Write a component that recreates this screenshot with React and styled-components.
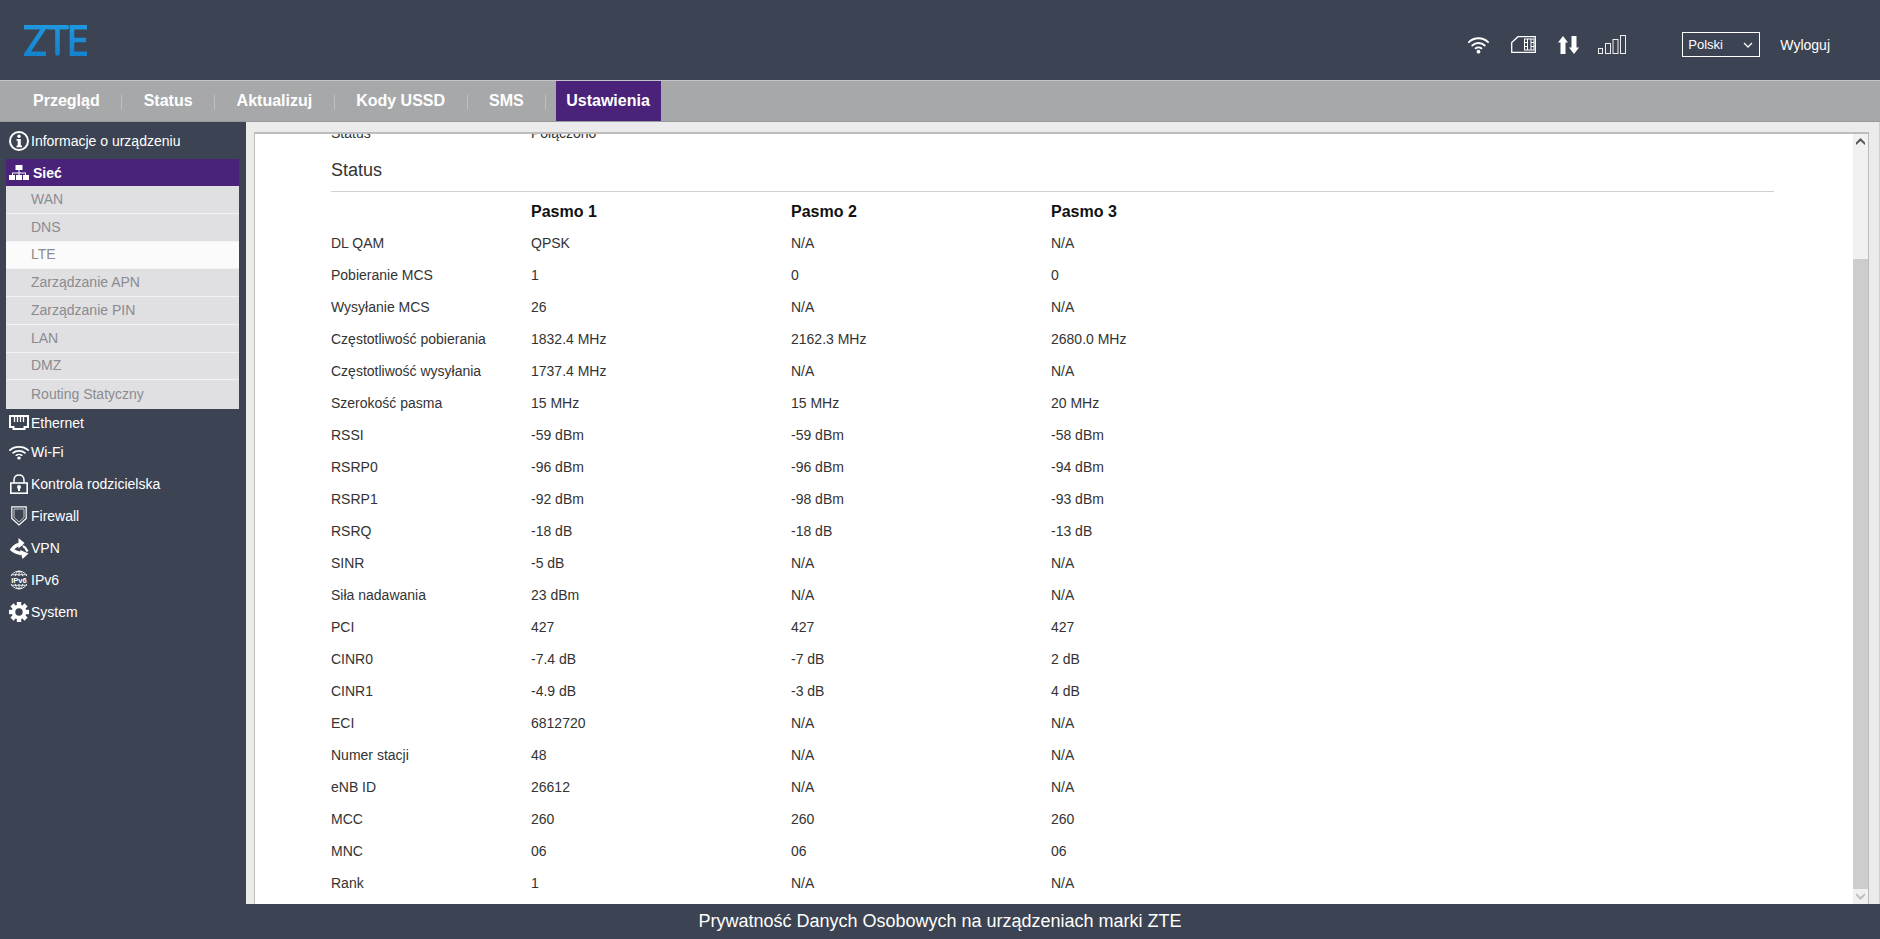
import React from "react";
import styled, { createGlobalStyle } from "styled-components";

const GlobalStyle = createGlobalStyle`
    html, body {
        margin: 0;
        padding: 0;
        height: 100%;
        overflow: hidden;
    }
    body {
        font-family: "Liberation Sans", Arial, sans-serif;
        font-size: 14px;
        color: #333;
    }
`;

const Page = styled.div`
    display: flex;
    flex-direction: column;
    height: 100vh;
    background-color: #3c4352;
`;

const Header = styled.header`
    flex: 0 0 80px;
    display: flex;
    align-items: center;
    justify-content: space-between;
    padding-left: 24px;
    box-sizing: content-box;
    border-bottom: 1px solid #c4c5c8;
`;

const HeaderRight = styled.div`
    display: flex;
    align-items: center;
    padding-right: 50px;
    padding-top: 9px;
`;

const StatusIcons = styled.div`
    display: flex;
    align-items: center;
    gap: 22px;
    margin-right: 56px;
`;

const SignalSvg = styled.svg`
    margin-left: -3px;
`;

const Language = styled.div`
    width: 78px;
    height: 25px;
    box-sizing: border-box;
    border: 1px solid #fff;
    display: flex;
    align-items: center;
    justify-content: space-between;
    padding: 0 6px 0 5px;
    color: #fff;
    font-size: 13px;
    margin-right: 20px;
`;

const Logout = styled.a`
    color: #fff;
    font-size: 14px;
`;

const Nav = styled.nav`
    flex: 0 0 40px;
    display: flex;
    align-items: stretch;
    padding-left: 33px;
    background-color: #a7a8aa;
    border-bottom: 1px solid #97989b;
`;

const NavItem = styled.a`
    display: flex;
    align-items: center;
    color: #fff;
    font-size: 16px;
    font-weight: bold;
    padding: ${props => props.$active ? "0 11px 0 10px" : "0"};
    background-color: ${props => props.$active ? "#4a227a" : "transparent"};
`;

const NavSep = styled.span`
    align-self: center;
    width: 1px;
    height: 14px;
    margin: 2px 21.5px 0;
    background-color: #bfc0c2;
`;

const LastNavSep = styled(NavSep)`
    margin-right: 10px;
`;

const Main = styled.div`
    flex: 1;
    display: flex;
    min-height: 0;
`;

const Sidebar = styled.aside`
    flex: 0 0 246px;
    padding-top: 1px;
    color: #fff;
`;

const MenuRow = styled.div`
    display: flex;
    align-items: center;
    height: ${props => props.$h || 32}px;
    padding-left: 9px;
    gap: 2px;
    font-size: 14px;
`;

const IconSlot = styled.span`
    width: 20px;
    height: 20px;
    display: flex;
    align-items: center;
    justify-content: center;
`;

const Group = styled.div`
    margin: 0 7px 0 6px;
`;

const GroupHead = styled.div`
    display: flex;
    align-items: center;
    height: 27px;
    padding-left: 3px;
    gap: 4px;
    background-color: #4a227a;
    font-weight: bold;
`;

const SubItem = styled.div`
    display: flex;
    align-items: center;
    padding-left: 25px;
    padding-bottom: 1px;
    color: #8b8b90;
    background-color: ${props => props.$active ? "#fbfbfb" : "#e0e0e2"};
    border-bottom: ${props => props.$last ? "0" : "1px solid #f2f2f3"};
    height: ${props => props.$last ? 27.75 : 25.75}px;
`;

const Content = styled.main`
    flex: 1;
    min-width: 0;
    display: flex;
    padding: 10px 10px 0 8px;
    background-color: #ebebeb;
    border-right: 1px solid #cfcfcf;
`;

const Panel = styled.section`
    flex: 1;
    min-width: 0;
    display: flex;
    background-color: #fff;
    border: 1px solid #bdbdbd;
    border-bottom: 0;
    border-top-width: 2px;
`;

const PanelBody = styled.div`
    flex: 1;
    min-width: 0;
    overflow: hidden;
    padding: 0 79px 0 76px;
`;

const ScrolledOff = styled.div`
    margin-top: -17px;
`;

const Scrollbar = styled.div`
    flex: 0 0 15px;
    display: flex;
    flex-direction: column;
    background-color: #f1f1f1;
`;

const ScrollButton = styled.div`
    flex: 0 0 15px;
    display: flex;
    align-items: center;
    justify-content: center;
`;

const ScrollTrack = styled.div`
    flex: 1;
    display: flex;
    flex-direction: column;
    justify-content: flex-end;
`;

const ScrollThumb = styled.div`
    height: 630px;
    background-color: #cdcdcd;
`;

const SectionTitle = styled.h2`
    margin: 0 0 3px;
    padding: 8px 0 7px;
    height: 27px;
    line-height: 27px;
    box-sizing: content-box;
    font-size: 18px;
    font-weight: normal;
    border-bottom: 1px solid #d0d0d0;
`;

const Row = styled.div`
    display: grid;
    grid-template-columns: 200px 260px 260px 260px;
    align-items: center;
    height: 32px;
`;

const Cell = styled.div`
    font-size: ${props => props.$head ? "16px" : "14px"};
    font-weight: ${props => props.$head ? "bold" : "normal"};
    color: ${props => props.$head ? "#111" : "#333"};
    padding-top: ${props => props.$head ? "2px" : "0"};
`;

const Footer = styled.footer`
    flex: 0 0 35px;
    display: flex;
    align-items: center;
    justify-content: center;
    color: #fff;
    font-size: 18px;
`;

function Logo() {
    return (
        <svg width="63" height="31" viewBox="0 0 63 31" fill="none" stroke="url(#zte)" strokeWidth="4.600">
            <defs>
                <linearGradient id="zte" gradientUnits="userSpaceOnUse" x1="0" y1="0" x2="0" y2="31">
                    <stop offset="0" stopColor="#1f97de" />
                    <stop offset="1" stopColor="#1482cd" />
                </linearGradient>
            </defs>
            <path d="M0 2.300 H20.500 L2.800 28.700 H22" />
            <path d="M24 2.300 H43 M33.500 2.300 V28.500" strokeLinecap="round" />
            <path d="M63 2.300 H48 V28.700 H63 M48 15 H62" />
        </svg>
    );
}

function WifiIcon({ width = 22, height = 18 }) {
    return (
        <svg width={width} height={height} viewBox="0 0 22 19" preserveAspectRatio="none" fill="none" stroke="#fff" strokeWidth="2" strokeLinecap="round">
            <path d="M1 6.500 C6.500 1 15.500 1 21 6.500" />
            <path d="M4.500 10 C8 6.600 14 6.600 17.500 10" />
            <path d="M8 13 C9.600 11.700 12.400 11.700 14 13" />
            <circle cx="11" cy="16.500" r="2" fill="#fff" stroke="none" />
        </svg>
    );
}

function SimIcon() {
    return (
        <svg width="25" height="17" viewBox="0 0 25 17" fill="none" stroke="#fff" strokeWidth="1.300">
            <path d="M7 .7 H24.300 V16.300 H.7 V6.500 Z" />
            <rect x="13.500" y="3" width="9.500" height="11" strokeWidth="1" />
            <path d="M16.500 3 V14 M20 3 V14 M13.500 6.500 H16.500 M13.500 10.500 H16.500 M20 6.500 H23 M20 10.500 H23" strokeWidth="1" />
        </svg>
    );
}

function ArrowsIcon() {
    return (
        <svg width="21" height="18" viewBox="0 0 21 18" fill="#fff">
            <path d="M5 0 L10 6.500 H7.500 V18 H2.500 V6.500 H0 Z" />
            <path d="M13.500 0 H18.500 V11.500 H21 L16 18 L11 11.500 H13.500 Z" />
        </svg>
    );
}

function SignalIcon() {
    return (
        <SignalSvg width="28" height="19" viewBox="0 0 28 19" fill="none" stroke="#eee" strokeWidth="1">
            <rect x=".5" y="13.500" width="4" height="5" />
            <rect x="7.500" y="8.500" width="5" height="10" />
            <rect x="15" y="4.500" width="5" height="14" />
            <rect x="22.500" y=".5" width="5" height="18" />
        </SignalSvg>
    );
}

function InfoIcon() {
    return (
        <svg width="20" height="20" viewBox="0 0 20 20" fill="#fff">
            <circle cx="10" cy="10" r="9" fill="none" stroke="#fff" strokeWidth="2" />
            <circle cx="10" cy="5.300" r="1.700" />
            <path d="M7.500 8 H11.800 V14.500 H13 V16.200 H7.500 V14.500 H8.700 V9.700 H7.500 Z" />
        </svg>
    );
}

function SitemapIcon() {
    return (
        <svg width="20" height="15" viewBox="0 0 20 15" fill="#fff">
            <rect x="6.500" y="0" width="7" height="5" />
            <path d="M9.500 5 H10.500 V7.500 H17 V10 H16 V8.500 H10.500 V10 H9.500 V8.500 H4 V10 H3 V7.500 H9.500 Z" />
            <rect x="0" y="10" width="6" height="5" />
            <rect x="7" y="10" width="6" height="5" />
            <rect x="14" y="10" width="6" height="5" />
        </svg>
    );
}

function EthernetIcon() {
    return (
        <svg width="20" height="15" viewBox="0 0 20 15" fill="none" stroke="#fff">
            <path d="M1 1 H19 V12 H15.500 V14 H4.500 V12 H1 Z" strokeWidth="2" />
            <path d="M5.500 2 V7 M8.500 2 V7 M11.500 2 V7 M14.500 2 V7" strokeWidth="1.300" />
        </svg>
    );
}

function LockIcon() {
    return (
        <svg width="18" height="20" viewBox="0 0 18 20" fill="none" stroke="#fff">
            <path d="M4 9 V6 C4 -.8 14 -.8 14 6 V9" strokeWidth="1.500" />
            <rect x=".8" y="9" width="16.400" height="10.200" strokeWidth="1.600" />
            <circle cx="9" cy="13" r="2" fill="#fff" stroke="none" />
            <rect x="8" y="13.500" width="2" height="3.500" fill="#fff" stroke="none" />
        </svg>
    );
}

function ShieldIcon() {
    return (
        <svg width="16" height="20" viewBox="0 0 16 20" fill="none" stroke="#fff">
            <path d="M.8 .8 H15.200 V12.500 L8 19 L.8 12.500 Z" strokeWidth="1.200" />
            <path d="M3 3 H13 V11.500 L8 16 L3 11.500 Z" strokeWidth="1" stroke="#c8c8c8" />
        </svg>
    );
}

function VpnIcon() {
    return (
        <svg width="20" height="21" viewBox="0 0 20 21" fill="#fff" stroke="#fff">
            <path d="M13.500 6 C9 6 5.500 8 3 11.500 C5.500 14 9 15 12.500 15.500" fill="none" strokeWidth="3.400" />
            <path d="M9.500 0 L15.500 5 L9.500 10.500 Z" stroke="none" />
            <path d="M11 12 L19.500 15.500 L13.500 21 Z" stroke="none" />
            <path d="M14 8 C16 9 17.500 11 18.500 13.500" fill="none" strokeWidth="2.400" />
        </svg>
    );
}

function Ipv6Icon() {
    return (
        <svg width="21" height="20" viewBox="0 0 21 20" fill="none" stroke="#fff" strokeWidth=".9">
            <circle cx="10.500" cy="10" r="9.400" />
            <ellipse cx="10.500" cy="10" rx="4.500" ry="9.400" />
            <path d="M10.500 .6 V6 M10.500 14 V19.400 M2.500 4.500 H18.500 M2.500 15.500 H18.500" />
            <rect x="0" y="6" width="21" height="8" fill="#3c4352" stroke="none" />
            <text x="10.500" y="13" textAnchor="middle" fill="#fff" stroke="none" fontSize="8" fontWeight="bold" fontFamily="Liberation Sans">IPv6</text>
        </svg>
    );
}

function GearIcon() {
    return (
        <svg width="20" height="20" viewBox="0 0 20 20" fill="#fff">
            {[0, 45, 90, 135, 180, 225, 270, 315].map(angle => (
                <rect key={angle} x="7.800" y="0" width="4.400" height="5" transform={`rotate(${angle} 10 10)`} />
            ))}
            <circle cx="10" cy="10" r="5.500" fill="none" stroke="#fff" strokeWidth="3.600" />
        </svg>
    );
}

const subItems = [
    "WAN", "DNS", "LTE", "Zarządzanie APN", "Zarządzanie PIN", "LAN", "DMZ", "Routing Statyczny",
];

const menuItems = [
    { label: "Ethernet", icon: <EthernetIcon />, h: 27 },
    { label: "Wi-Fi", icon: <WifiIcon width={20} height={15} /> },
    { label: "Kontrola rodzicielska", icon: <LockIcon /> },
    { label: "Firewall", icon: <ShieldIcon /> },
    { label: "VPN", icon: <VpnIcon /> },
    { label: "IPv6", icon: <Ipv6Icon /> },
    { label: "System", icon: <GearIcon /> },
];

const navItems = ["Przegląd", "Status", "Aktualizuj", "Kody USSD", "SMS"];

const rows = [
    ["DL QAM", "QPSK", "N/A", "N/A"],
    ["Pobieranie MCS", "1", "0", "0"],
    ["Wysyłanie MCS", "26", "N/A", "N/A"],
    ["Częstotliwość pobierania", "1832.4 MHz", "2162.3 MHz", "2680.0 MHz"],
    ["Częstotliwość wysyłania", "1737.4 MHz", "N/A", "N/A"],
    ["Szerokość pasma", "15 MHz", "15 MHz", "20 MHz"],
    ["RSSI", "-59 dBm", "-59 dBm", "-58 dBm"],
    ["RSRP0", "-96 dBm", "-96 dBm", "-94 dBm"],
    ["RSRP1", "-92 dBm", "-98 dBm", "-93 dBm"],
    ["RSRQ", "-18 dB", "-18 dB", "-13 dB"],
    ["SINR", "-5 dB", "N/A", "N/A"],
    ["Siła nadawania", "23 dBm", "N/A", "N/A"],
    ["PCI", "427", "427", "427"],
    ["CINR0", "-7.4 dB", "-7 dB", "2 dB"],
    ["CINR1", "-4.9 dB", "-3 dB", "4 dB"],
    ["ECI", "6812720", "N/A", "N/A"],
    ["Numer stacji", "48", "N/A", "N/A"],
    ["eNB ID", "26612", "N/A", "N/A"],
    ["MCC", "260", "260", "260"],
    ["MNC", "06", "06", "06"],
    ["Rank", "1", "N/A", "N/A"],
];

export default function App() {
    return (
        <Page>
            <GlobalStyle />
            <Header>
                <Logo />
                <HeaderRight>
                    <StatusIcons>
                        <WifiIcon width={21} height={18} />
                        <SimIcon />
                        <ArrowsIcon />
                        <SignalIcon />
                    </StatusIcons>
                    <Language>
                        Polski
                        <svg width="10" height="6" viewBox="0 0 10 6" fill="none" stroke="#fff" strokeWidth="1.300">
                            <path d="M1 1 L5 5 L9 1" />
                        </svg>
                    </Language>
                    <Logout>Wyloguj</Logout>
                </HeaderRight>
            </Header>

            <Nav>
                {navItems.map((item, i) => (
                    <React.Fragment key={item}>
                        <NavItem>{item}</NavItem>
                        {i < navItems.length - 1 ? <NavSep /> : <LastNavSep />}
                    </React.Fragment>
                ))}
                <NavItem $active>Ustawienia</NavItem>
            </Nav>

            <Main>
                <Sidebar>
                    <MenuRow $h={36}>
                        <IconSlot><InfoIcon /></IconSlot>
                        Informacje o urządzeniu
                    </MenuRow>
                    <Group>
                        <GroupHead>
                            <IconSlot><SitemapIcon /></IconSlot>
                            Sieć
                        </GroupHead>
                        {subItems.map((item, i) => (
                            <SubItem key={item} $active={item === "LTE"} $last={i === subItems.length - 1}>
                                {item}
                            </SubItem>
                        ))}
                    </Group>
                    {menuItems.map(item => (
                        <MenuRow key={item.label} $h={item.h}>
                            <IconSlot>{item.icon}</IconSlot>
                            {item.label}
                        </MenuRow>
                    ))}
                </Sidebar>

                <Content>
                    <Panel>
                        <PanelBody>
                            <ScrolledOff>
                                <Row>
                                    <Cell>Status</Cell>
                                    <Cell>Połączono</Cell>
                                </Row>
                                <SectionTitle>Status</SectionTitle>
                                <Row>
                                    <Cell />
                                    <Cell $head>Pasmo 1</Cell>
                                    <Cell $head>Pasmo 2</Cell>
                                    <Cell $head>Pasmo 3</Cell>
                                </Row>
                                {rows.map(row => (
                                    <Row key={row[0]}>
                                        {row.map((value, i) => <Cell key={i}>{value}</Cell>)}
                                    </Row>
                                ))}
                            </ScrolledOff>
                        </PanelBody>
                        <Scrollbar>
                            <ScrollButton>
                                <svg width="9" height="7" viewBox="0 0 9 7" fill="#555">
                                    <path d="M4.500 0 L9 4.500 V7 L4.500 3 L0 7 V4.500 Z" />
                                </svg>
                            </ScrollButton>
                            <ScrollTrack>
                                <ScrollThumb />
                            </ScrollTrack>
                            <ScrollButton>
                                <svg width="9" height="7" viewBox="0 0 9 7" fill="#c0c0c0">
                                    <path d="M0 0 L4.500 4 L9 0 V2.500 L4.500 7 L0 2.500 Z" />
                                </svg>
                            </ScrollButton>
                        </Scrollbar>
                    </Panel>
                </Content>
            </Main>

            <Footer>Prywatność Danych Osobowych na urządzeniach marki ZTE</Footer>
        </Page>
    );
}
